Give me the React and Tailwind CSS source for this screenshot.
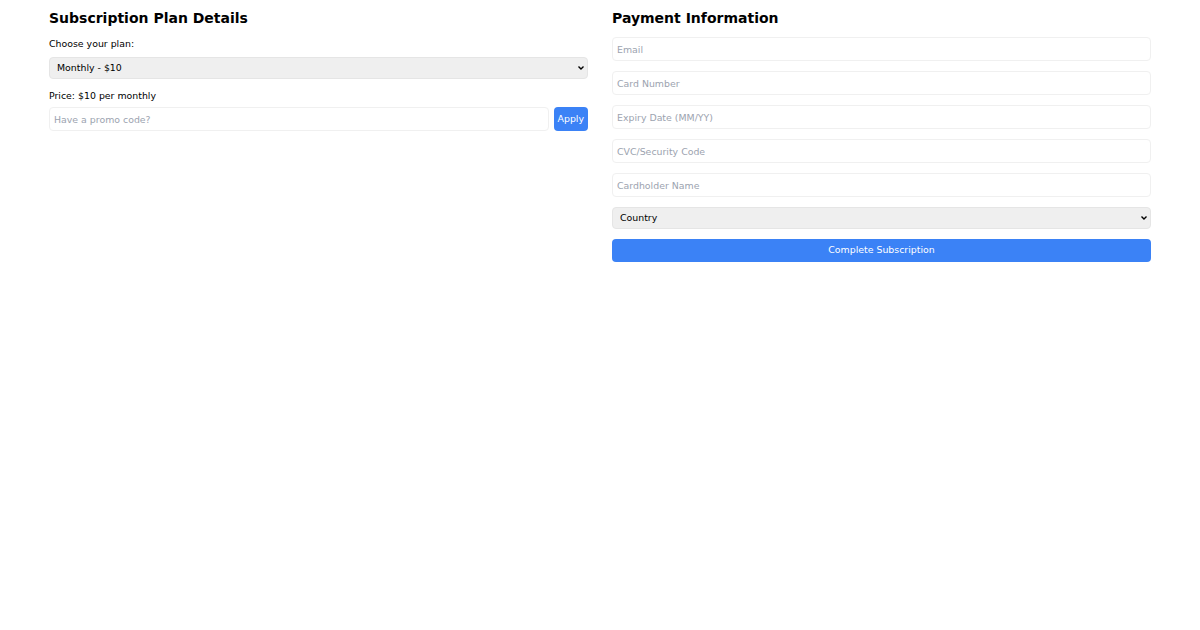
function Chevron() {
  return (
    <svg className="absolute right-[4px] top-1/2 -translate-y-1/2 pointer-events-none" width="6" height="4" viewBox="0 0 6 4">
      <path d="M0.5 0.5 L3 3 L5.5 0.5" fill="none" stroke="#000" strokeWidth="1.4" />
    </svg>
  )
}

function Select({ children, className = '', defaultValue }) {
  return (
    <div className={`relative ${className}`}>
      <select
        className="block w-full h-[22px] appearance-none rounded bg-[#efefef] border border-[#e5e5e5] text-[9.4px] px-[7px] outline-none"
        defaultValue={defaultValue}
      >
        {children}
      </select>
      <Chevron />
    </div>
  )
}

export default function App() {
  const fields = ['Email', 'Card Number', 'Expiry Date (MM/YY)', 'CVC/Security Code', 'Cardholder Name']

  return (
    <div className="min-h-screen bg-white font-['DejaVu_Sans',sans-serif] text-black">
      <div className="max-w-6xl mx-auto px-[25px] pt-[9px] grid grid-cols-2 gap-6">
        {/* Plan */}
        <div>
          <h2 className="text-[14px] font-bold leading-[18px] mb-[10px]">Subscription Plan Details</h2>
          <label className="block text-[9.4px] leading-[14px] mb-[6px]">Choose your plan:</label>
          <Select className="mb-[10px]" defaultValue="monthly">
            <option value="monthly">Monthly - $10</option>
            <option value="yearly">Yearly - $100</option>
          </Select>
          <p className="text-[9.4px] leading-[14px] mb-[4px]">Price: $10 per monthly</p>
          <div className="flex gap-[5px]">
            <input
              className="flex-1 h-[24px] rounded border border-[#f0f0f0] px-[4px] text-[9.4px] placeholder:text-[#9ca3af] outline-none"
              placeholder="Have a promo code?"
            />
            <button className="h-[24px] px-[4px] rounded bg-[#3b82f6] text-white text-[9.4px]">Apply</button>
          </div>
        </div>

        {/* Payment */}
        <div>
          <h2 className="text-[14px] font-bold leading-[18px] mb-[10px]">Payment Information</h2>
          <div className="flex flex-col gap-[10px]">
            {fields.map((p) => (
              <input
                key={p}
                className="w-full h-[24px] rounded border border-[#f0f0f0] px-[4px] text-[9.4px] placeholder:text-[#9ca3af] outline-none"
                placeholder={p}
              />
            ))}
            <Select defaultValue="">
              <option value="">Country</option>
              <option value="us">United States</option>
            </Select>
            <button className="w-full h-[23px] rounded bg-[#3b82f6] text-white text-[9.4px]">Complete Subscription</button>
          </div>
        </div>
      </div>
    </div>
  )
}
